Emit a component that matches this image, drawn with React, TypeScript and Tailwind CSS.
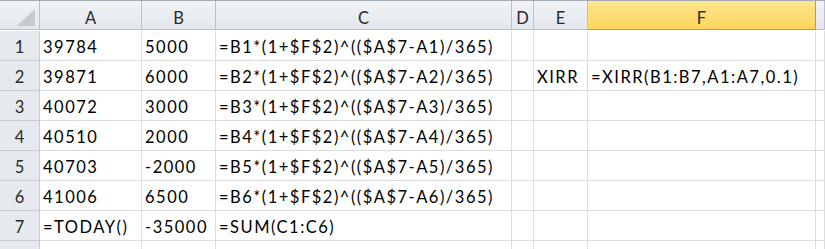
import React from "react";

const cols = ["", "A", "B", "C", "D", "E", "F", ""];

const data: string[][] = [
  ["39784", "5000", "=B1*(1+$F$2)^(($A$7-A1)/365)", "", "", "", ""],
  ["39871", "6000", "=B2*(1+$F$2)^(($A$7-A2)/365)", "", "XIRR", "=XIRR(B1:B7,A1:A7,0.1)", ""],
  ["40072", "3000", "=B3*(1+$F$2)^(($A$7-A3)/365)", "", "", "", ""],
  ["40510", "2000", "=B4*(1+$F$2)^(($A$7-A4)/365)", "", "", "", ""],
  ["40703", "-2000", "=B5*(1+$F$2)^(($A$7-A5)/365)", "", "", "", ""],
  ["41006", "6500", "=B6*(1+$F$2)^(($A$7-A6)/365)", "", "", "", ""],
  ["=TODAY()", "-35000", "=SUM(C1:C6)", "", "", "", ""],
  ["", "", "", "", "", "", ""],
];

export default function App() {
  return (
    <div
      className="w-[825px] h-[249px] overflow-hidden bg-white text-black"
      style={{ fontFamily: "Lato, 'Liberation Sans', sans-serif" }}
    >
      <div className="grid grid-cols-[40px_102px_74px_296px_22px_54px_228px_9px] grid-rows-[30px_repeat(7,30px)_30px] border-t border-[#a4aab3]">
        {cols.map((c, i) => {
          if (i === 0) {
            return (
              <div
                key={i}
                className="relative h-[29px] border-r border-b border-[#bcc2cb] bg-gradient-to-b from-[#f1f3f6] to-[#e3e7ed]"
              >
                <div className="absolute right-[4px] bottom-[3px] w-0 h-0 border-l-[18px] border-l-transparent border-b-[17px] border-b-[#c6c9cf]" />
              </div>
            );
          }
          if (c === "F") {
            return (
              <div
                key={i}
                className="h-[29px] flex items-end justify-center pb-[2px] leading-[17px] border-r border-b border-[#c0964a] bg-gradient-to-b from-[#fde68e] to-[#ffd45a] text-[16.5px] text-[#2a2a2a]"
              >
                {c}
              </div>
            );
          }
          return (
            <div
              key={i}
              className="h-[29px] flex items-end justify-center pb-[2px] leading-[17px] border-r border-b border-[#bcc2cb] bg-gradient-to-b from-[#f1f3f6] to-[#e3e7ed] text-[16.5px] text-[#2a2a2a]"
            >
              {c}
            </div>
          );
        })}
        {data.map((row, r) => (
          <React.Fragment key={r}>
            <div className="flex items-end justify-center pb-[4px] leading-[17px] border-r border-b border-[#c6cbd3] bg-[#e6e9ee] text-[16.5px] text-[#2a2a2a]">
              {r < 7 ? r + 1 : ""}
            </div>
            {row.map((v, c) => (
              <div
                key={c}
                className="flex items-end pl-[3px] pb-[4px] leading-[17px] border-r border-b border-[#dadcdd] text-[16.5px] tracking-[1.5px] whitespace-nowrap"
              >
                {v}
              </div>
            ))}
          </React.Fragment>
        ))}
      </div>
    </div>
  );
}
